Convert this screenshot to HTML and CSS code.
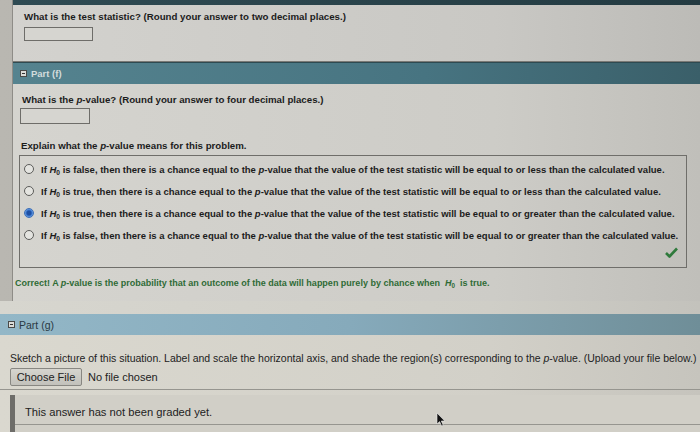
FILE: index.html
```html
<!DOCTYPE html>
<html>
<head>
<meta charset="utf-8">
<link rel="stylesheet" href="styles.css">
</head>
<body>
<div class="page">
  <div class="upper">
    <section class="sec-e">
      <div class="topbar"></div>
      <div class="e-body">
        <p class="q q1">What is the test statistic? (Round your answer to two decimal places.)</p>
        <div class="inp inp1"></div>
      </div>
    </section>
    <div class="part-head part-f"><span class="minus"></span><span class="ptitle">Part (f)</span></div>
    <section class="f-body">
      <p class="q q2">What is the <i>p</i>-value? (Round your answer to four decimal places.)</p>
      <div class="inp inp2"></div>
      <p class="q q3">Explain what the <i>p</i>-value means for this problem.</p>
      <div class="options">
        <div class="opt"><span class="radio"></span><span>If <i>H</i><sub>0</sub> is false, then there is a chance equal to the <i>p</i>-value that the value of the test statistic will be equal to or less than the calculated value.</span></div>
        <div class="opt"><span class="radio"></span><span>If <i>H</i><sub>0</sub> is true, then there is a chance equal to the <i>p</i>-value that the value of the test statistic will be equal to or less than the calculated value.</span></div>
        <div class="opt"><span class="radio on"></span><span>If <i>H</i><sub>0</sub> is true, then there is a chance equal to the <i>p</i>-value that the value of the test statistic will be equal to or greater than the calculated value.</span></div>
        <div class="opt"><span class="radio"></span><span>If <i>H</i><sub>0</sub> is false, then there is a chance equal to the <i>p</i>-value that the value of the test statistic will be equal to or greater than the calculated value.</span></div>
        <div class="check-row">
          <svg class="check" width="13" height="11" viewBox="0 0 13 11"><path d="M1 6 L4.5 9.5 L12 1.5" fill="none" stroke="#2f7a3c" stroke-width="2.6" stroke-linejoin="round"/></svg>
        </div>
      </div>
      <p class="correct">Correct! A <i>p</i>-value is the probability that an outcome of the data will happen purely by chance when &nbsp;<i>H</i><sub>0</sub> &nbsp;is true.</p>
    </section>
  </div>
  <section class="sec-g">
    <div class="part-head part-g"><span class="minus"></span><span class="ptitle">Part (g)</span></div>
    <div class="g-body">
      <p class="sketch">Sketch a picture of this situation. Label and scale the horizontal axis, and shade the region(s) corresponding to the <i>p</i>-value. (Upload your file below.)</p>
      <div class="file-row"><span class="btn">Choose File</span><span class="nofile">No file chosen</span></div>
      <div class="graded"><div class="graded-text">This answer has not been graded yet.</div></div>
    </div>
  </section>
  <svg class="cursor" width="10" height="15" viewBox="0 0 10 15"><path d="M1 1 L1 12 L3.6 9.6 L5.6 14 L7.2 13.3 L5.3 9 L8.8 9 Z" fill="#111" stroke="#eee" stroke-width="0.6"/></svg>
</div>
</body>
</html>
```
FILE: styles.css
```css
* { box-sizing: border-box; }
html, body { margin: 0; padding: 0; }
body {
  background: #b8b6b0;
  font-family: "Liberation Sans", Arial, sans-serif;
  color: #1c1c1c;
}
.page {
  position: relative;
  width: 700px;
  height: 432px;
  overflow: hidden;
  background: linear-gradient(90deg, #b9b7b1, #aaa9a4);
}
p { margin: 0; }
.upper {
  margin-left: 12px;
  border-left: 1px solid #8e8c87;
}
.sec-e {
  background: linear-gradient(90deg, #d3d2ce, #c9c8c4 70%, #bcbbb7);
}
.topbar {
  height: 5px;
  background: linear-gradient(90deg, #2f4b53, #243b42);
}
.e-body {
  padding: 6px 0 20px 11px;
  border-bottom: 1px solid #7a7975;
}
.q {
  font-size: 9.7px;
  font-weight: bold;
  line-height: 12px;
}
.inp {
  border: 1px solid #6e6d69;
  background: #d6d5d0;
}
.inp1 { width: 69px; height: 14px; margin-top: 4px; }
.part-head {
  display: flex;
  align-items: center;
  font-weight: bold;
}
.part-f {
  height: 22px;
  padding-left: 7px;
  font-size: 9.5px;
  background: linear-gradient(90deg, #55838f, #477481 60%, #3a5f69);
  border-top: 1px solid #2e4a51;
  color: #d3dcdc;
}
.minus {
  position: relative;
  width: 7px;
  height: 7px;
  border: 1px solid #4a4a48;
  background: #dcdcd8;
  margin-right: 4px;
  flex: none;
}
.minus::after {
  content: "";
  position: absolute;
  left: 1px;
  right: 1px;
  top: 2px;
  height: 1px;
  background: #333;
}
.f-body {
  padding: 10px 0 12px 9px;
  background: linear-gradient(90deg, #d5d4cf, #cdccc7 70%, #c0bfba);
}
.inp2 { width: 70px; height: 16px; margin-top: 2px; margin-left: -2px; }
.q3 { margin-top: 16px; margin-left: -1px; }
.options {
  margin: 3px 0 0 -3px;
  width: 668px;
  border: 1px solid #6f6e6a;
  padding-top: 2px;
}
.opt {
  display: flex;
  align-items: center;
  height: 22px;
  padding-left: 4px;
  font-size: 9.5px;
  font-weight: bold;
  white-space: nowrap;
}
.opt i, .q i, .correct i, .sketch i { font-style: italic; }
.opt sub, .correct sub { font-size: 70%; vertical-align: -2px; line-height: 0; }
.radio {
  width: 10px;
  height: 10px;
  border-radius: 50%;
  border: 1px solid #5c5c5a;
  background: #e4e4e0;
  margin-right: 7px;
  flex: none;
}
.radio.on {
  border-color: #3c6eb6;
  background: radial-gradient(circle, #1d4fa3 0 2px, #3b78d0 3px, #9cc0ea 5px);
}
.check-row {
  height: 21px;
  display: flex;
  justify-content: flex-end;
  align-items: flex-start;
  padding: 1px 8px 0 0;
}
.correct {
  margin: 9px 0 0 -7px;
  font-size: 9px;
  font-weight: bold;
  line-height: 12px;
  color: #2f6b36;
}
.correct i { color: #2f6b36; }
.sec-g {
  padding-top: 13px;
  background: linear-gradient(90deg, #d7d6cf, #cfcec7 70%, #c3c2bc);
}
.part-g {
  height: 21px;
  padding-left: 8px;
  background: linear-gradient(90deg, #93b7c7, #86aabb 50%, #6f8e98);
  color: #2a3a44;
  font-weight: normal;
  font-size: 10.5px;
}
.g-body {
  padding: 16px 0 0 10px;
  background: linear-gradient(90deg, #dad8cf, #d2d0c8 70%, #c6c4bd);
}
.sketch {
  font-size: 10.5px;
  line-height: 14px;
  white-space: nowrap;
  color: #222;
}
.file-row {
  display: flex;
  align-items: center;
  margin-top: 3px;
  font-size: 11px;
}
.btn {
  width: 72px;
  height: 18px;
  display: flex;
  align-items: center;
  justify-content: center;
  border: 1px solid #888782;
  border-radius: 2px;
  background: linear-gradient(#d6d5cf, #c2c1bb);
  color: #222;
}
.nofile { margin-left: 6px; color: #222; }
.graded {
  margin: 3px 0 0 -10px;
  padding: 5px 0 0 10px;
  border-top: 1px solid #96958f;
}
.graded-text {
  height: 40px;
  border-left: 5px solid #6e6d69;
  padding: 10px 0 0 10px;
  font-size: 11.2px;
  line-height: 14px;
  color: #222;
  background: linear-gradient(#d1cfc7 0 29px, #96958f 29px 30px, #d1cfc7 30px);
}
.cursor {
  position: absolute;
  left: 436px;
  top: 412px;
}
```
